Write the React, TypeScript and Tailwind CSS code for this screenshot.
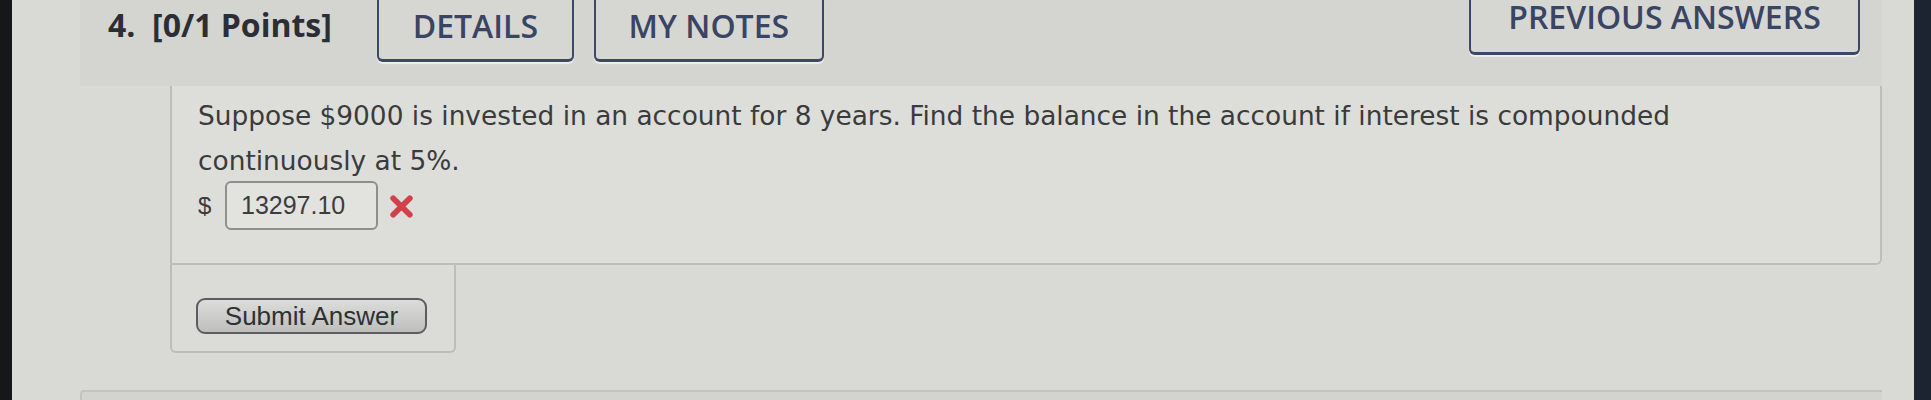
import { useState } from 'react';

function WrongMark() {
  return (
    <svg viewBox="0 0 24 24" className="w-[25px] h-[25px] ml-[11px] mt-[1px]">
      <path d="M4 4 L20 20 M20 4 L4 20" stroke="#d2404c" strokeWidth="5.5" strokeLinecap="round" />
    </svg>
  );
}

// header tabs: their top edge sits above the visible area, so only sides and bottom are drawn
function TabButton({ label, className }: { label: string; className: string }) {
  return (
    <button
      className={`flex items-center justify-center border-2 border-t-0 border-b-[3px] border-[#3d4869] rounded-b-md bg-[#d6d7d3] shadow-[0_2px_1px_rgba(255,255,255,0.6)] font-['Open_Sans',sans-serif] font-semibold leading-[26px] text-[32px] text-[#3a4463] ${className}`}
    >
      {label}
    </button>
  );
}

export default function App() {
  const [answer] = useState('13297.10');

  return (
    <div className="flex w-full h-[400px] overflow-hidden bg-[#d9dad6]">
      <div className="w-[12px] shrink-0 bg-[#15171a]" />

      <div className="flex-1 flex flex-col pl-[68px] pr-[32px]">
        {/* question header */}
        <div className="h-[86px] shrink-0 flex items-start bg-[#d4d5d1] pl-[28px] pr-[22px]">
          <div className="mt-[6px] font-['Open_Sans',sans-serif] font-bold text-[32px] leading-[38px] text-[#2b2e35] whitespace-pre">
            4.  [0/1 Points]
          </div>
          <TabButton label="DETAILS" className="ml-[45px] w-[197px] h-[62px] pb-[7px]" />
          <TabButton label="MY NOTES" className="ml-[20px] w-[230px] h-[62px] pb-[7px]" />
          <TabButton label="PREVIOUS ANSWERS" className="ml-auto w-[391px] h-[55px] pb-[18px]" />
        </div>

        <div className="pl-[90px]">
          {/* question body */}
          <div className="h-[179px] bg-[#dddeda] border-l-2 border-r-2 border-b-2 border-[#bdbeba] rounded-br-md pl-[26px] pt-[7px] font-['DejaVu_Sans',sans-serif] text-[26.4px] leading-[45px] text-[#3a3b3d]">
            <p>
              Suppose $9000 is invested in an account for 8 years. Find the balance in the account if interest is compounded
              <br />
              continuously at 5%.
            </p>
            <div className="flex items-center mt-[-2px]">
              <span className="font-['Liberation_Sans',sans-serif] text-[24px] w-[27px]">$</span>
              <div className="flex items-center w-[153px] h-[49px] border-2 border-[#8d8f8d] rounded-md bg-[#e2e3df] pl-[14px] font-['Liberation_Sans',sans-serif] text-[25px] text-[#3b3c3f]">
                {answer}
              </div>
              <WrongMark />
            </div>
          </div>

          {/* submit */}
          <div className="w-[286px] h-[88px] border-l-2 border-r-2 border-b-2 border-[#bdbeba] rounded-b-md pl-[24px] pt-[33px] bg-[#dbdcd8]">
            <button className="w-[231px] h-[36px] border-2 border-[#5b5d60] rounded-[9px] bg-gradient-to-b from-[#dcdddb] to-[#bebfbd] font-['Liberation_Sans',sans-serif] text-[26px] leading-none text-[#2f3033]">
              Submit Answer
            </button>
          </div>
        </div>

        <div className="mt-[37px] flex-1 bg-[#d3d4d0] border-t-2 border-l-2 border-[#c3c4c0] rounded-tl-sm" />
      </div>

      <div className="w-[17px] shrink-0 bg-[#1b2430]" />
    </div>
  );
}
